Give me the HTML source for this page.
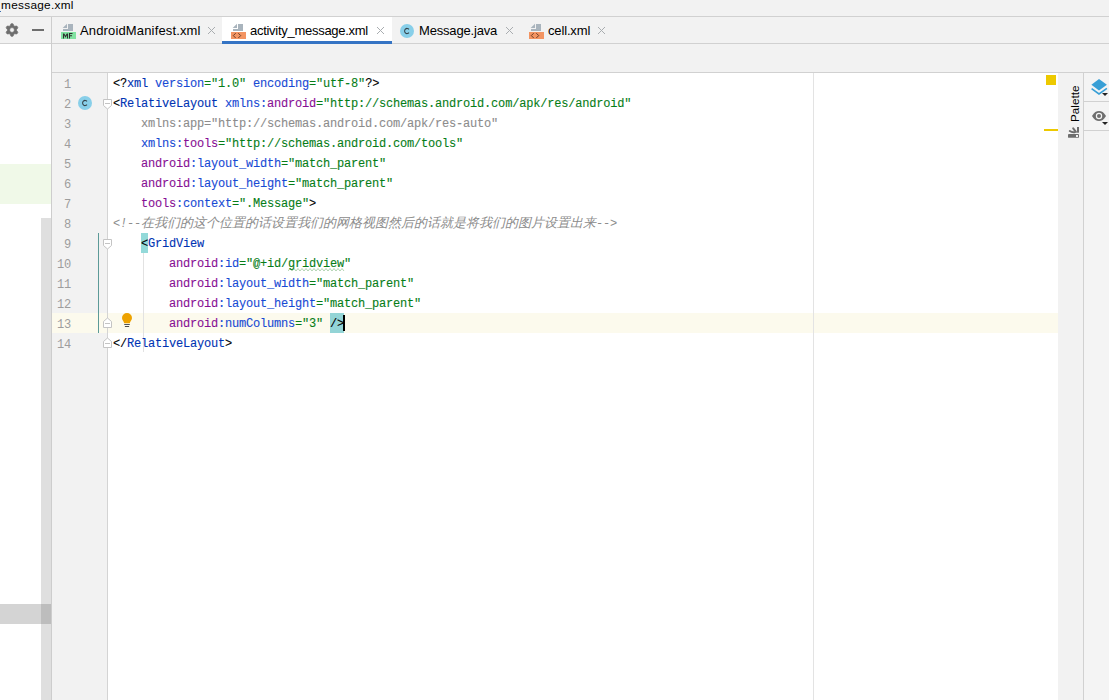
<!DOCTYPE html>
<html><head><meta charset="utf-8">
<style>
*{margin:0;padding:0;box-sizing:border-box}
html,body{width:1109px;height:700px;overflow:hidden;background:#f2f2f2;font-family:"Liberation Sans",sans-serif}
.a{position:absolute}
#title{left:0;top:0;width:1109px;height:16px;background:#f2f2f2}
#title span{position:absolute;left:1px;top:-2.5px;font-size:11.8px;letter-spacing:0.3px;color:#000}
#tb1{left:0;top:16px;width:1109px;height:1px;background:#d1d1d1}
#leftpanel{left:0;top:44px;width:51px;height:656px;background:#fff}
#leftbar{left:51px;top:17px;width:1px;height:683px;background:#cdcdcd}
#tabs{left:52px;top:17px;width:1057px;height:26px;background:#f2f2f2}
#tabbot{left:0;top:43px;width:1109px;height:1px;background:#d1d1d1}
#toolbar{left:52px;top:44px;width:1057px;height:28px;background:#f2f2f2}
#tbbot{left:52px;top:72px;width:1057px;height:1px;background:#d1d1d1}
#gutter{left:52px;top:73px;width:55px;height:627px;background:#f2f2f2}
#gutline{left:107px;top:73px;width:1px;height:627px;background:#d4d4d4}
#code{left:108px;top:73px;width:950px;height:627px;background:#fff}
#margin{left:813px;top:73px;width:1px;height:627px;background:#e3e3e3}
.tab{position:absolute;top:17px;height:26px;font-size:13px;color:#000}
.tab .t{position:absolute;top:6px;white-space:nowrap}
.x{position:absolute;top:9px;width:9px;height:9px}
.ln{position:absolute;left:52px;width:19px;margin-top:1.5px;text-align:right;font-family:"Liberation Mono",monospace;font-size:12px;letter-spacing:-0.2px;color:#9d9d9d;height:20px;line-height:20px}
.cl{position:absolute;left:113px;margin-top:1px;height:20px;line-height:20px;font-family:"Liberation Mono",monospace;font-size:12px;letter-spacing:-0.2px;white-space:pre;color:#000;-webkit-text-stroke:0.1px currentColor}
.tg{color:#0033b3}.an{color:#174ad4}.ns{color:#871094}.av{color:#067d17}.cm{color:#8c8c8c;font-style:italic;-webkit-text-stroke:0}.gr{color:#8c8c8c}
.cj{font-size:13px;letter-spacing:0;line-height:12px;color:#8c8c8c;font-weight:300}
</style></head><body>
<div class="a" id="title"><span>message.xml</span></div>
<div class="a" id="tb1"></div>
<div class="a" style="left:0;top:11px;width:1px;height:1px;background:#3c6fb0"></div>
<div class="a" id="leftpanel"></div>
<div class="a" id="tabs"></div>
<div class="a" id="toolbar"></div>
<div class="a" id="tabbot"></div>
<div class="a" id="leftbar"></div>
<div class="a" id="gutter"></div>
<div class="a" id="code"></div>
<div class="a" id="tbbot"></div>
<div class="a" style="left:52px;top:313px;width:1006px;height:20px;background:#fcfaed"></div>
<div class="a" id="gutline"></div>
<div class="a" id="margin"></div>
<div class="a" style="left:98px;top:233px;width:1px;height:100px;background:#5c9a98"></div>
<div class="a" style="left:143px;top:253px;width:1px;height:99px;background:#e2e2e2"></div>
<div class="a" style="left:141px;top:233px;width:7px;height:20px;background:#93d9d9"></div>
<div class="a" style="left:330px;top:313px;width:14px;height:20px;background:#93d4d6"></div>
<div class="a" style="left:343px;top:315px;width:2px;height:16px;background:#000;z-index:5"></div>
<svg class="a" style="left:288px;top:267px" width="57" height="5" viewBox="0 0 57 5"><path d="M0 4 L2 1.5 L4 4 L6 1.5 L8 4 L10 1.5 L12 4 L14 1.5 L16 4 L18 1.5 L20 4 L22 1.5 L24 4 L26 1.5 L28 4 L30 1.5 L32 4 L34 1.5 L36 4 L38 1.5 L40 4 L42 1.5 L44 4 L46 1.5 L48 4 L50 1.5 L52 4 L54 1.5 L56 4" fill="none" stroke="#a9cfa9" stroke-width="0.9"/></svg>
<svg class="a" style="left:78px;top:96px" width="14" height="14" viewBox="0 0 14 14"><circle cx="7" cy="7" r="7" fill="#88cfe9"/><path d="M9 5.3 A2.5 2.6 0 1 0 9 8.7" fill="none" stroke="#34434a" stroke-width="1.05"/></svg>
<svg class="a" style="left:120px;top:312px" width="14" height="16" viewBox="0 0 14 16"><path d="M7 1 A5 5 0 0 1 12 6 C12 8.3 10 9.3 9.8 11.2 L4.2 11.2 C4 9.3 2 8.3 2 6 A5 5 0 0 1 7 1 Z" fill="#eda200"/><rect x="4.2" y="12" width="5.6" height="1" fill="#4e5560"/><rect x="4.9" y="14" width="4.2" height="1" fill="#4a4a4a"/></svg>
<svg class="a" style="left:103px;top:99px" width="10" height="11" viewBox="0 0 10 11"><path d="M0.5 0.5 H8.5 V6.5 L4.5 10 L0.5 6.5 Z" fill="#fff" stroke="#c4c4c4" stroke-width="1"/><rect x="2" y="4" width="5" height="1" fill="#c4c4c4"/></svg><svg class="a" style="left:103px;top:239px" width="10" height="11" viewBox="0 0 10 11"><path d="M0.5 0.5 H8.5 V6.5 L4.5 10 L0.5 6.5 Z" fill="#fff" stroke="#c4c4c4" stroke-width="1"/><rect x="2" y="4" width="5" height="1" fill="#c4c4c4"/></svg><svg class="a" style="left:103px;top:317px" width="10" height="11" viewBox="0 0 10 11"><path d="M0.5 10.5 H8.5 V4.5 L4.5 1 L0.5 4.5 Z" fill="#fff" stroke="#c4c4c4" stroke-width="1"/><rect x="2" y="6" width="5" height="1" fill="#c4c4c4"/></svg><svg class="a" style="left:103px;top:337px" width="10" height="11" viewBox="0 0 10 11"><path d="M0.5 10.5 H8.5 V4.5 L4.5 1 L0.5 4.5 Z" fill="#fff" stroke="#c4c4c4" stroke-width="1"/><rect x="2" y="6" width="5" height="1" fill="#c4c4c4"/></svg>

<div class="a" style="left:0;top:164px;width:51px;height:40px;background:#f0f9e8"></div>
<div class="a" style="left:41px;top:218px;width:10px;height:482px;background:#dfdfdf"></div>
<div class="a" style="left:0;top:604px;width:51px;height:20px;background:#d4d4d4"></div>
<div class="a" style="left:41px;top:604px;width:10px;height:20px;background:#bdbdbd"></div>
<svg class="a" style="left:4px;top:22px" width="16" height="16" viewBox="0 0 16 16"><path fill="#6e6e6e" fill-rule="evenodd" stroke="#6e6e6e" stroke-width="0.7" stroke-linejoin="round" d="M6.03 3.96 L7.01 1.78 L8.99 1.78 L9.97 3.96 L10.52 4.27 L12.90 4.04 L13.88 5.74 L12.49 7.69 L12.49 8.31 L13.88 10.26 L12.90 11.96 L10.52 11.73 L9.97 12.04 L8.99 14.22 L7.01 14.22 L6.03 12.04 L5.48 11.73 L3.10 11.96 L2.12 10.26 L3.51 8.31 L3.51 7.69 L2.12 5.74 L3.10 4.04 L5.48 4.27 Z M8 5.6 A2.4 2.4 0 1 0 8 10.4 A2.4 2.4 0 1 0 8 5.6 Z"/></svg>
<div class="a" style="left:32px;top:29px;width:12px;height:2px;background:#6e6e6e"></div>
<div class="a" style="left:222px;top:17px;width:170px;height:26px;background:#fff"></div>
<div class="a" style="left:222px;top:41px;width:170px;height:3px;background:#3574c4"></div>
<svg class="a" style="left:60px;top:23px" width="16" height="16" viewBox="0 0 16 16"><path fill="#a9b4bd" d="M8 1h5v7H3V6h5z"/><path fill="#a9b4bd" d="M2.7 5 L7 0.7 L7 5 Z"/><rect x="1" y="9" width="15" height="7" fill="#80e2a0"/><path d="M3.5 15.5 V10.5 M3.8 10.8 L5.5 13.8 L7.2 10.8 M7.5 10.5 V15.5 M9.5 15.5 V10.5 M9 10.5 H12.5 M9 12.8 H12" fill="none" stroke="#2f2f2f" stroke-width="1.05"/></svg><svg class="a" style="left:230px;top:23px" width="16" height="16" viewBox="0 0 16 16"><path fill="#a9b4bd" d="M8 1h5v7H3V6h5z"/><path fill="#a9b4bd" d="M2.7 5 L7 0.7 L7 5 Z"/><rect x="1" y="9" width="15" height="7" fill="#f39462"/><path d="M5.7 10.2 L3.3 12.6 L5.7 15 M8.3 10.2 L10.7 12.6 L8.3 15" fill="none" stroke="#5e3522" stroke-width="0.9"/></svg><svg class="a" style="left:528px;top:23px" width="16" height="16" viewBox="0 0 16 16"><path fill="#a9b4bd" d="M8 1h5v7H3V6h5z"/><path fill="#a9b4bd" d="M2.7 5 L7 0.7 L7 5 Z"/><rect x="1" y="9" width="15" height="7" fill="#f39462"/><path d="M5.7 10.2 L3.3 12.6 L5.7 15 M8.3 10.2 L10.7 12.6 L8.3 15" fill="none" stroke="#5e3522" stroke-width="0.9"/></svg><svg class="a" style="left:400px;top:24px" width="14" height="14" viewBox="0 0 14 14"><circle cx="7" cy="7" r="7" fill="#88cfe9"/><path d="M9 5.3 A2.5 2.6 0 1 0 9 8.7" fill="none" stroke="#34434a" stroke-width="1.05"/></svg><div class="tab" style="left:80px"><span class="t" style="letter-spacing:0.15px">AndroidManifest.xml</span></div><div class="tab" style="left:250px"><span class="t" style="letter-spacing:-0.28px">activity_message.xml</span></div><div class="tab" style="left:419px"><span class="t" style="letter-spacing:-0.18px">Message.java</span></div><div class="tab" style="left:548px"><span class="t" style="letter-spacing:-0.15px">cell.xml</span></div><svg class="a" style="left:207px;top:25.5px" width="9" height="9" viewBox="0 0 9 9"><path d="M1 1 L8 8 M8 1 L1 8" stroke="#a9adb0" stroke-width="1"/></svg><svg class="a" style="left:376px;top:25.5px" width="9" height="9" viewBox="0 0 9 9"><path d="M1 1 L8 8 M8 1 L1 8" stroke="#a9adb0" stroke-width="1"/></svg><svg class="a" style="left:505px;top:25.5px" width="9" height="9" viewBox="0 0 9 9"><path d="M1 1 L8 8 M8 1 L1 8" stroke="#a9adb0" stroke-width="1"/></svg><svg class="a" style="left:597px;top:25.5px" width="9" height="9" viewBox="0 0 9 9"><path d="M1 1 L8 8 M8 1 L1 8" stroke="#a9adb0" stroke-width="1"/></svg>
<div class="ln" style="top:73px">1</div>
<div class="cl" style="top:73px"><span>&lt;?</span><span class="tg">xml</span> <span class="an">version</span><span class="av">="1.0"</span> <span class="an">encoding</span><span class="av">="utf-8"</span>?&gt;</div>
<div class="ln" style="top:93px">2</div>
<div class="cl" style="top:93px">&lt;<span class="tg">RelativeLayout</span> <span class="an">xmlns:</span><span class="ns">android</span><span class="av">="http://schemas.android.com/apk/res/android"</span></div>
<div class="ln" style="top:113px">3</div>
<div class="cl" style="top:113px">    <span class="gr">xmlns:app="http://schemas.android.com/apk/res-auto"</span></div>
<div class="ln" style="top:133px">4</div>
<div class="cl" style="top:133px">    <span class="an">xmlns:</span><span class="ns">tools</span><span class="av">="http://schemas.android.com/tools"</span></div>
<div class="ln" style="top:153px">5</div>
<div class="cl" style="top:153px">    <span class="ns">android</span><span class="an">:layout_width</span><span class="av">="match_parent"</span></div>
<div class="ln" style="top:173px">6</div>
<div class="cl" style="top:173px">    <span class="ns">android</span><span class="an">:layout_height</span><span class="av">="match_parent"</span></div>
<div class="ln" style="top:193px">7</div>
<div class="cl" style="top:193px">    <span class="ns">tools</span><span class="an">:context</span><span class="av">=".Message"</span>&gt;</div>
<div class="ln" style="top:213px">8</div>
<div class="cl" style="top:213px"><span class="cm">&lt;!--<span class="cj">在我们的这个位置的话设置我们的网格视图然后的话就是将我们的图片设置出来</span>--&gt;</span></div>
<div class="ln" style="top:233px">9</div>
<div class="cl" style="top:233px">    <span class="hl">&lt;</span><span class="tg">GridView</span></div>
<div class="ln" style="top:253px">10</div>
<div class="cl" style="top:253px">        <span class="ns">android</span><span class="an">:id</span><span class="av">="@+id/<span class="typo">gridview</span>"</span></div>
<div class="ln" style="top:273px">11</div>
<div class="cl" style="top:273px">        <span class="ns">android</span><span class="an">:layout_width</span><span class="av">="match_parent"</span></div>
<div class="ln" style="top:293px">12</div>
<div class="cl" style="top:293px">        <span class="ns">android</span><span class="an">:layout_height</span><span class="av">="match_parent"</span></div>
<div class="ln" style="top:313px">13</div>
<div class="cl" style="top:313px">        <span class="ns">android</span><span class="an">:numColumns</span><span class="av">="3"</span> <span class="hl">/&gt;</span><span class="caret"></span></div>
<div class="ln" style="top:333px">14</div>
<div class="cl" style="top:333px">&lt;/<span class="tg">RelativeLayout</span>&gt;</div>

<div class="a" style="left:1058px;top:73px;width:25px;height:627px;background:#f2f2f2"></div>
<div class="a" style="left:1083px;top:73px;width:1px;height:627px;background:#d1d1d1"></div>
<div class="a" style="left:1084px;top:73px;width:25px;height:627px;background:#f4f4f4"></div>
<div class="a" style="left:1084px;top:101px;width:25px;height:1px;background:#d1d1d1"></div>
<div class="a" style="left:1084px;top:130px;width:25px;height:1px;background:#d1d1d1"></div>
<div class="a" style="left:1046px;top:75px;width:10px;height:10px;background:#edc900"></div>
<div class="a" style="left:1044px;top:129px;width:14px;height:2px;background:#edc900"></div>
<div class="a" style="left:1068px;top:122px;width:40px;height:14px;transform-origin:0 0;transform:rotate(-90deg);font-size:11.7px;line-height:14px;color:#000;white-space:nowrap">Palette</div>
<svg class="a" style="left:1067px;top:126px" width="13" height="13" viewBox="0 0 13 13"><rect x="1" y="8" width="11" height="3.8" rx="0.9" fill="#6e6e6e"/><rect x="9" y="9" width="2" height="2" fill="#f2f2f2"/><path d="M2.8 5 Q5 6.6 7.6 6.2" fill="none" stroke="#6e6e6e" stroke-width="2" stroke-linecap="round"/><path d="M6.2 2.4 L8.9 5.9" stroke="#6e6e6e" stroke-width="2" stroke-linecap="round"/><rect x="10" y="1" width="2" height="5.7" fill="#6e6e6e"/></svg>
<svg class="a" style="left:1090px;top:77px" width="19" height="20" viewBox="0 0 19 20"><path d="M9 2 L16.9 7.7 L9 13.4 L1.4 7.7 Z" fill="#389fd6"/><path d="M1.6 11.6 L9 17 L16.9 11.3" fill="none" stroke="#389fd6" stroke-width="1.6"/><path d="M12 16 H18 L15 19 Z" fill="#232323"/></svg>
<svg class="a" style="left:1090px;top:109px" width="19" height="17" viewBox="0 0 19 17"><path d="M2 7 C4 3.3 6.5 2 9 2 C11.5 2 14 3.3 16 7 C14 10.7 11.5 12 9 12 C6.5 12 4 10.7 2 7 Z" fill="#6e6e6e"/><circle cx="9" cy="7" r="3.2" fill="#f4f4f4"/><circle cx="9" cy="7" r="2" fill="#6e6e6e"/><path d="M12 13 H18 L15 16 Z" fill="#232323"/></svg>
</body></html>
